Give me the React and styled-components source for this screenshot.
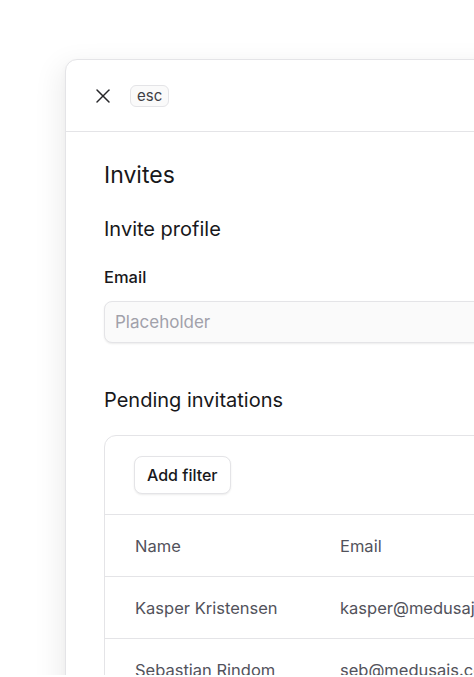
import React from "react";
import styled, { createGlobalStyle } from "styled-components";

const Global = createGlobalStyle`
  html, body { margin: 0; padding: 0; background: #ffffff; overflow: hidden; }
  body { font-family: Inter, "Noto Sans", sans-serif; -webkit-font-smoothing: antialiased; }
  * { box-sizing: border-box; }
`;

const Stage = styled.div`
  height: 675px;
  width: 474px;
  overflow: hidden;
  padding: 59px 0 0 65px;
  background: #ffffff;
`;

const Panel = styled.div`
  width: 700px;
  min-height: 700px;
  background: #ffffff;
  border: 1px solid #e4e4e7;
  border-radius: 12px 0 0 0;
  box-shadow: -6px 6px 28px rgba(0, 0, 0, 0.07), 0 2px 6px rgba(0, 0, 0, 0.03);
`;

const Header = styled.div`
  height: 72px;
  display: flex;
  align-items: center;
  gap: 15px;
  padding-left: 25px;
  border-bottom: 1px solid #e4e4e7;
`;

const CloseButton = styled.button`
  width: 24px;
  height: 24px;
  padding: 0;
  border: 0;
  background: transparent;
  color: #27272a;
  display: flex;
  align-items: center;
  justify-content: center;
`;

const Kbd = styled.span`
  height: 22px;
  padding: 0 6px;
  display: inline-flex;
  align-items: center;
  font-size: 15px;
  color: #3f3f46;
  background: #fafafa;
  border: 1px solid #e4e4e7;
  border-radius: 6px;
`;

const Body = styled.div`
  padding: 27px 0 0 38px;
  display: flex;
  flex-direction: column;
`;

const Title = styled.h1`
  margin: 0;
  font-size: 23px;
  line-height: 32px;
  font-weight: 400;
  color: #18181b;
`;

const Subtitle = styled.h2`
  margin: ${(p) => p.$top}px 0 0;
  font-size: 20px;
  line-height: 28px;
  font-weight: 400;
  color: #18181b;
`;

const Label = styled.label`
  margin-top: 22px;
  font-size: 16.5px;
  line-height: 24px;
  font-weight: 500;
  color: #18181b;
`;

const Input = styled.input`
  margin-top: 12px;
  width: 620px;
  height: 42px;
  padding: 0 10px;
  font-family: inherit;
  font-size: 17px;
  color: #18181b;
  background: #fafafa;
  border: 1px solid #e4e4e7;
  border-radius: 8px;
  box-shadow: 0 1px 2px rgba(0, 0, 0, 0.08);
  outline: none;
  &::placeholder { color: #a1a1aa; }
`;

const TableCard = styled.div`
  margin-top: 21px;
  width: 640px;
  border: 1px solid #e4e4e7;
  border-radius: 12px 0 0 0;
  overflow: hidden;
`;

const Toolbar = styled.div`
  padding: 20px 29px;
  border-bottom: 1px solid #e4e4e7;
  display: flex;
`;

const FilterButton = styled.button`
  height: 38px;
  padding: 0 12px;
  font-family: inherit;
  font-size: 16px;
  font-weight: 500;
  color: #18181b;
  background: #ffffff;
  border: 1px solid #e4e4e7;
  border-radius: 8px;
  box-shadow: 0 1px 2px rgba(0, 0, 0, 0.08);
`;

const Row = styled.div`
  height: 62px;
  display: grid;
  grid-template-columns: 205px 1fr;
  align-items: center;
  border-bottom: 1px solid #e4e4e7;
`;

const Cell = styled.div`
  padding-left: 30px;
  font-size: 16.5px;
  color: #52525b;
  white-space: nowrap;
`;

const rows = [
  ["Kasper Kristensen", "kasper@medusajs.com"],
  ["Sebastian Rindom", "seb@medusajs.com"],
];

export default function App() {
  return (
    <>
      <Global />
      <Stage>
        <Panel>
          <Header>
            <CloseButton aria-label="Close">
              <svg width="24" height="24" viewBox="0 0 24 24" fill="none" stroke="currentColor" strokeWidth="1.5" strokeLinecap="round">
                <path d="M18 6 6 18" />
                <path d="m6 6 12 12" />
              </svg>
            </CloseButton>
            <Kbd>esc</Kbd>
          </Header>
          <Body>
            <Title>Invites</Title>
            <Subtitle $top={24}>Invite profile</Subtitle>
            <Label>Email</Label>
            <Input placeholder="Placeholder" />
            <Subtitle $top={43}>Pending invitations</Subtitle>
            <TableCard>
              <Toolbar>
                <FilterButton>Add filter</FilterButton>
              </Toolbar>
              <Row>
                <Cell>Name</Cell>
                <Cell>Email</Cell>
              </Row>
              {rows.map(([n, e]) => (
                <Row key={n}>
                  <Cell>{n}</Cell>
                  <Cell>{e}</Cell>
                </Row>
              ))}
            </TableCard>
          </Body>
        </Panel>
      </Stage>
    </>
  );
}
